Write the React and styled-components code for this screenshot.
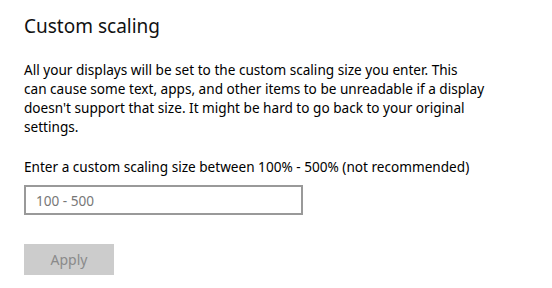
import React from 'react'
import styled, { createGlobalStyle } from 'styled-components'

const Global = createGlobalStyle`
  html, body {
    margin: 0;
    padding: 0;
    background: #ffffff;
  }
  body {
    font-family: 'Noto Sans', 'Open Sans', sans-serif;
    color: #000000;
  }
`

const Page = styled.main`
  width: 552px;
  height: 288px;
  box-sizing: border-box;
  padding: 12px 24px 0;
  display: flex;
  flex-direction: column;
`

const Title = styled.h1`
  margin: 0;
  font-size: 19px;
  font-weight: 400;
  line-height: 28px;
  color: #111;
`

const Body = styled.p`
  margin: 20px 0 0;
  width: 500px;
  font-size: 13.6px;
  line-height: 19px;
`

const Label = styled.label`
  margin-top: 21px;
  font-size: 13.6px;
  line-height: 19px;
`

const Field = styled.input`
  margin-top: 9px;
  width: 279px;
  height: 30px;
  box-sizing: border-box;
  border: 2px solid #999999;
  padding: 0 10px;
  font-family: inherit;
  font-size: 13.6px;
  color: #000;
  outline: none;
  &::placeholder {
    color: #777777;
  }
`

const Button = styled.button`
  margin-top: 29px;
  width: 90px;
  height: 31px;
  border: none;
  background: #cccccc;
  color: #8a8a8a;
  font-family: inherit;
  font-size: 14px;
  padding: 0;
`

export default function App() {
  return (
    <>
      <Global />
      <Page>
        <Title>Custom scaling</Title>
        <Body>
          All your displays will be set to the custom scaling size you enter. This
          <br />
          can cause some text, apps, and other items to be unreadable if a display
          <br />
          doesn't support that size. It might be hard to go back to your original
          <br />
          settings.
        </Body>
        <Label htmlFor="scale">
          Enter a custom scaling size between 100% - 500% (not recommended)
        </Label>
        <Field id="scale" placeholder="100 - 500" />
        <Button disabled>Apply</Button>
      </Page>
    </>
  )
}
